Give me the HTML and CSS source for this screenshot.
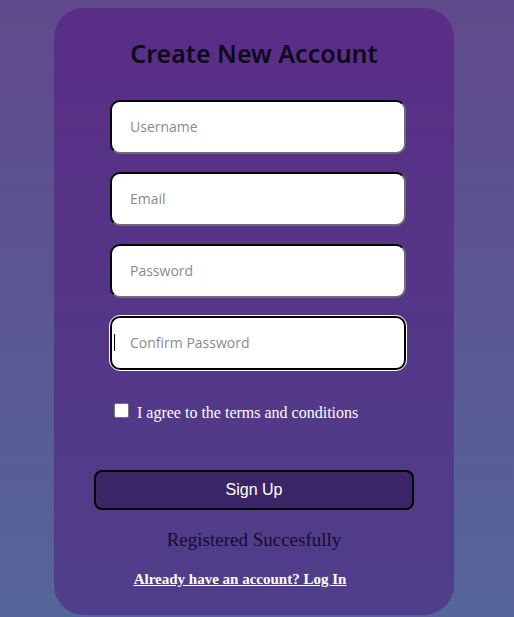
FILE: index.html
```html
<!DOCTYPE html>
<html lang="en">
<head>
<meta charset="utf-8">
<title>Create New Account</title>
<link rel="stylesheet" href="styles.css">
</head>
<body>
  <main class="card">
    <h2 class="title">Create New Account</h2>
    <form class="form">
      <input class="field" type="text" placeholder="Username">
      <input class="field" type="email" placeholder="Email">
      <input class="field" type="password" placeholder="Password">
      <div class="field field-focus"><span class="caret"></span><span class="ph">Confirm Password</span></div>
      <label class="agree"><span class="box"></span>I agree to the terms and conditions</label>
      <button class="btn" type="button">Sign Up</button>
    </form>
    <p class="status">Registered Succesfully</p>
    <a class="login" href="#">Already have an account? Log In</a>
  </main>
</body>
</html>
```
FILE: styles.css
```css
html, body {
  margin: 0;
  height: 100%;
}
body {
  background: linear-gradient(180deg, #60498a 0%, #55659a 100%);
  display: flex;
  justify-content: center;
  align-items: flex-start;
  padding-top: 8px;
  box-sizing: border-box;
  font-family: "Liberation Serif", serif;
}
.card {
  width: 400px;
  height: 607px;
  box-sizing: border-box;
  border-radius: 30px;
  background: linear-gradient(180deg, #5a2d86 0%, #4f3f8a 100%);
  display: flex;
  flex-direction: column;
  align-items: center;
  margin-left: -6px;
}
.title {
  margin: 31px 0 0;
  font-family: "Noto Sans", sans-serif;
  font-weight: 600;
  font-size: 25px;
  line-height: 28px;
  color: #0d0a1a;
}
.form {
  width: 320px;
  display: flex;
  flex-direction: column;
  margin-top: 33px;
}
.field {
  box-sizing: border-box;
  width: 296px;
  height: 54px;
  margin: 0 0 18px 16px;
  padding: 0 18px;
  border: 2px inset #767676;
  border-color: #2b2b2b #6f6f6f #6f6f6f #2b2b2b;
  border-radius: 10px;
  background: #fff;
  font-family: "Open Sans", sans-serif;
  font-size: 14px;
  line-height: 18px;
  padding-bottom: 1px;
  outline: none;
}
.field::placeholder {
  color: #8a8a8a;
}
.field-focus {
  display: flex;
  align-items: center;
  border: 2px solid #000;
  outline: 1px solid #fff;
  outline-offset: 0;
  padding-left: 2px;
}
.caret {
  width: 1px;
  height: 17px;
  background: #000;
  margin-right: 15px;
}
.ph {
  color: #8a8a8a;
}
.agree {
  display: flex;
  align-items: center;
  margin: 15px 0 0 20px;
  color: #fff;
  font-size: 16px;
  height: 20px;
}
.box {
  width: 13px;
  height: 13px;
  border: 1px solid #767676;
  border-radius: 2px;
  background: #fff;
  margin-right: 8px;
  margin-top: -5px;
}
.btn {
  margin-top: 47px;
  height: 40px;
  width: 320px;
  background: #3b2567;
  border: 2px solid #000;
  border-radius: 8px;
  color: #fff;
  font-family: "Liberation Sans", sans-serif;
  font-size: 16px;
}
.status {
  margin: 18px 0 0;
  font-size: 19px;
  line-height: 24px;
  color: #150f25;
}
.login {
  margin: 19px 28px 0 0;
  color: #fff;
  font-size: 15px;
  font-weight: bold;
  text-decoration: underline;
}
```
